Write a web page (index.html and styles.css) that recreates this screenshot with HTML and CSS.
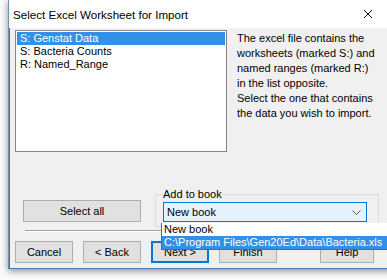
FILE: index.html
```html
<!DOCTYPE html>
<html>
<head>
<meta charset="utf-8">
<link rel="stylesheet" href="styles.css">
</head>
<body>
<div class="window">
  <div class="titlebar">
    <span class="title">Select Excel Worksheet for Import</span>
    <svg class="close" width="10" height="10" viewBox="0 0 10 10"><path d="M1 1L9 9M9 1L1 9" stroke="#111" stroke-width="1" fill="none"/></svg>
  </div>
  <div class="client">
    <div class="top">
      <div class="listbox">
        <div class="item sel">S: Genstat Data</div>
        <div class="item">S: Bacteria Counts</div>
        <div class="item">R: Named_Range</div>
      </div>
      <div class="info">
        <p>The excel file contains the worksheets (marked S:) and named ranges (marked R:) in the list opposite.</p>
        <p>Select the one that contains the data you wish to import.</p>
      </div>
    </div>
    <div class="middle">
      <button class="btn selall">Select all</button>
      <fieldset class="group">
        <legend>Add to book</legend>
        <div class="combo">
          <span>New book</span>
          <svg class="chev" width="9" height="5" viewBox="0 0 9 5"><path d="M0.5 0.5L4.5 4.5L8.5 0.5" stroke="#555" stroke-width="1" fill="none"/></svg>
        </div>
      </fieldset>
    </div>
    <div class="sep"></div>
    <div class="buttons">
      <button class="btn">Cancel</button>
      <button class="btn">&lt; Back</button>
      <button class="btn default">Next &gt;</button>
      <button class="btn">Finish</button>
      <button class="btn help">Help</button>
    </div>
  </div>
  <div class="dropdown">
    <div class="ditem">New book</div>
    <div class="ditem dsel">C:\Program Files\Gen20Ed\Data\Bacteria.xls</div>
  </div>
</div>
</body>
</html>
```
FILE: styles.css
```css
html, body {
  margin: 0;
  padding: 0;
  overflow: hidden;
}
body {
  background: #fbfbfb;
  width: 387px;
  height: 280px;
  font-family: "Liberation Sans", Arial, sans-serif;
  font-size: 11px;
  color: #000;
}
.window {
  position: relative;
  margin-left: 8px;
  width: 395px;
  border-left: 1px solid #6f8fb3;
  border-bottom: 1px solid #3f7fc0;
  background: #f0f0f0;
  box-shadow: 0 2px 7px rgba(0,0,0,0.45);
}
.titlebar {
  height: 28px;
  background: #fff;
  display: flex;
  align-items: center;
  padding-left: 4px;
  position: relative;
}
.title {
  flex: 1;
  font-size: 11.6px;
}
.close {
  margin-right: 31px;
}
.client {
  padding: 2px 0 5px 5px;
  border-left: 1px solid #2d7bd0;
}
.top {
  display: flex;
  gap: 10px;
}
.listbox {
  width: 210px;
  height: 119px;
  border: 1px solid #828790;
  background: #fff;
  padding-top: 1px;
}
.item {
  height: 13px;
  line-height: 13px;
  padding-left: 3px;
  margin: 0 1px;
}
.item.sel {
  background: #3390e8;
  color: #fff;
}
.info {
  width: 140px;
  line-height: 15px;
  padding-top: 1px;
}
.info p {
  margin: 0;
}
.middle {
  display: flex;
  align-items: flex-start;
  margin-top: 35px;
}
.btn {
  font-family: inherit;
  font-size: 11px;
  color: #000;
  background: #e1e1e1;
  border: 1px solid #adadad;
  padding: 0;
  height: 22px;
  width: 58px;
  box-sizing: border-box;
}
.selall {
  width: 118px;
  margin-left: 8px;
  margin-top: 13px;
}
.group {
  margin: 0 0 0 14px;
  padding: 1px 11px 4px 7px;
  border: 1px solid #dcdcdc;
  width: 204px;
}
.group legend {
  padding: 0;
  line-height: 14px;
  margin-left: 0;
}
.combo {
  height: 20px;
  box-sizing: border-box;
  border: 1px solid #0078d7;
  background: #e5f1fb;
  display: flex;
  align-items: center;
  justify-content: space-between;
  padding: 0 5px 0 3px;
}
.sep {
  margin: 3px 11px 0 10px;
  border-top: 1px solid #a0a0a0;
  border-bottom: 1px solid #ffffff;
}
.buttons {
  display: flex;
  gap: 10px;
  margin-top: 9px;
}
.btn.default {
  border: 2px solid #0078d7;
}
.btn.help {
  margin-left: 33px;
  width: 54px;
}
.dropdown {
  position: absolute;
  left: 152px;
  top: 223px;
  width: 240px;
  background: #fff;
  border: 1px solid #646464;
  border-top: none;
}
.ditem {
  height: 13px;
  line-height: 13px;
  padding-left: 2px;
  white-space: nowrap;
}
.ditem.dsel {
  background: #3390e8;
  color: #fff;
}
```
